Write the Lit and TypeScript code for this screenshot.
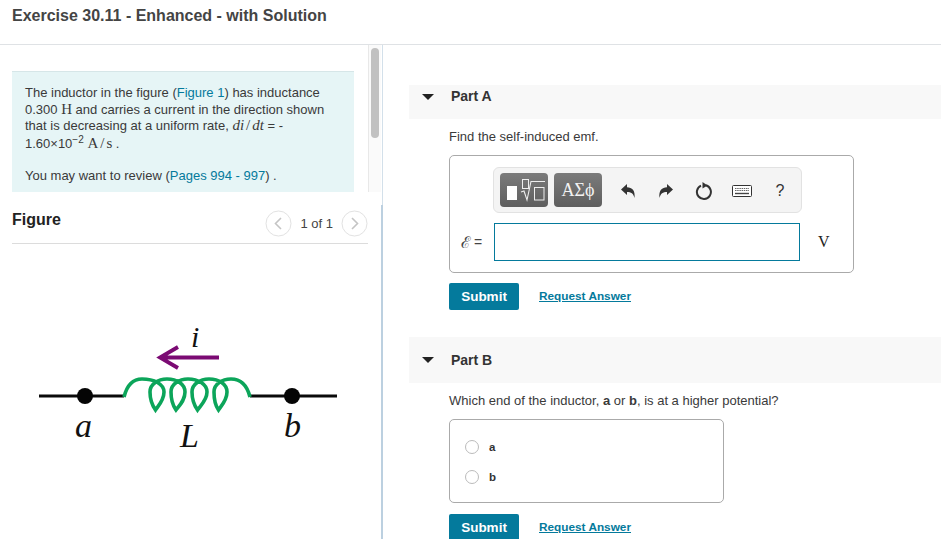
import { LitElement, html, css, svg } from "lit";
import { customElement } from "lit/decorators.js";

const coil = "M124 397C127 385 133 379 142 379C154 379 164 384 164 392C164 400 159 405 155.500 410C152 405 150 400 150 392C150 384 158 379 167 379C177 379 185 384 185 392C185 400 180 405 176 410C172.500 405 171 400 171 392C171 384 179 379 188 379C198 379 207 384 207 392C207 400 201 405 197.500 410C194 405 192 400 192 392C192 384 200 379 209 379C219 379 227 384 227 392C227 400 222 405 218.500 410C215 405 214 400 214 392C214 384 222 379 231 379C240 379 247 385 250 397";

@customElement("app-root")
export class AppRoot extends LitElement {
  static styles = css`
    :host { display: block; font-family: "Liberation Sans", Arial, sans-serif; color: #333; background: #fff; }
    .page { height: 539px; overflow: hidden; display: flex; flex-direction: column; }
    .head { height: 38px; flex: none; border-bottom: 1px solid #dfe2e5; padding: 6px 12px 0; box-sizing: content-box; }
    .head h1 { margin: 0; font-size: 16px; line-height: 19px; font-weight: 700; color: #444; }
    .cols { flex: 1; display: flex; min-height: 0; }
    .left { width: 381px; flex: none; display: flex; flex-direction: column; }
    .top { height: 147px; flex: none; display: flex; }
    .scrollarea { width: 368px; box-sizing: border-box; padding: 26px 14px 0 12px; overflow: hidden; }
    .card { height: 121px; box-sizing: border-box; background: #e6f5f6; border-top: 1px solid #d6e6e8; padding: 13px 13px 0; font-size: 13px; line-height: 16.5px; color: #3a3a3a; }
    .card p { margin: 0 0 16px; }
    .card a, .link { color: #047a9c; text-decoration: none; }
    .m { font-family: "Liberation Serif", serif; font-size: 15px; line-height: 0; }
    .mi { font-family: "Liberation Serif", serif; font-style: italic; font-size: 15px; line-height: 0; }
    .sl { margin: 0 2px; }
    sup { font-size: 10px; line-height: 0; }
    .l4 { display: inline-block; margin-top: 1px; }
    .track { width: 13px; box-sizing: border-box; background: #fafafa; border-left: 1px solid #e8e8e8; padding: 3px 2px 0 2px; }
    .thumb { height: 90px; background: #c1c1c1; border-radius: 4px; }
    .figure { flex: 1; padding: 0 13px 0 12px; }
    .figbar { height: 52px; box-sizing: border-box; border-bottom: 1px solid #dcdcdc; display: flex; align-items: flex-start; padding-top: 19px; }
    .figbar h2 { margin: -1px 0 0; font-size: 16px; line-height: 19px; font-weight: 700; color: #222; flex: 1; }
    .pager { display: flex; align-items: center; gap: 8px; font-size: 13px; color: #444; margin-top: -1px; }
    .pager svg { display: block; }
    .fig { display: block; margin: 0 0 0 -12px; }
    .fig text { font-family: "Liberation Serif", serif; font-style: italic; fill: #111; }
    .divider { width: 2px; flex: none; display: flex; flex-direction: column; }
    .thin { height: 160px; margin-left: 1px; background: #d3e0ea; }
    .thick { flex: 1; background: #bcd0e0; }
    .right { flex: 1; padding: 40px 0 0 26px; min-width: 0; }
    .band { background: #f8f8f8; display: flex; align-items: center; gap: 17px; padding-left: 13px; font-weight: 700; font-size: 14px; color: #333; }
    .a { height: 34px; align-items: flex-start; padding-top: 3px; box-sizing: border-box; }
    .a span { line-height: 17px; }
    .b { height: 46px; margin-top: 27px; }
    .tri { width: 12px; height: 6px; flex: none; display: block; }
    .a .tri { margin-top: 6px; }
    .body { margin-left: 40px; }
    .q { font-size: 13px; line-height: 16px; color: #3a3a3a; margin: 10px 0 10px; }
    .box { border: 1px solid #aaa; border-radius: 5px; box-sizing: border-box; background: #fff; }
    .box.ans { width: 405px; height: 118px; padding: 11px 0 0 43px; }
    .tools { width: 309px; height: 46px; box-sizing: border-box; background: #f4f4f4; border: 1px solid #e2e2e2; border-radius: 6px; display: flex; align-items: center; padding-left: 6px; }
    .btn { flex: none; width: 48px; height: 34px; border-radius: 4px; background: linear-gradient(#7b7b7b, #5e5e5e); display: flex; align-items: center; justify-content: center; color: #f2f2f2; font-family: "Liberation Serif", serif; font-size: 18px; margin-right: 6px; }
    .btn svg { display: block; }
    .icons { display: flex; align-items: center; margin: 1px 0 0 1px; }
    .ic { width: 38px; display: flex; justify-content: center; align-items: center; height: 20px; color: #333; font-size: 16px; }
    .inrow { display: flex; align-items: center; margin: 10px 0 0 -32px; }
    .eq { width: 33px; font-size: 14px; color: #444; white-space: nowrap; display: flex; align-items: center; gap: 3px; }
    .eq i { font-family: "DejaVu Serif", serif; font-size: 16px; font-style: normal; }
    .input { width: 306px; height: 38px; box-sizing: border-box; border: 1px solid #047a9c; background: #fff; }
    .unit { margin-left: 18px; font-family: "Liberation Serif", serif; font-size: 16px; color: #222; }
    .act { display: flex; align-items: center; gap: 20px; margin-top: 10px; }
    .act2 { margin-top: 11px; }
    .sub { width: 70px; height: 27px; box-sizing: border-box; background: #047a9c; color: #fff; font-weight: 700; font-size: 13.5px; border-radius: 2px; display: flex; align-items: center; justify-content: center; }
    .link { font-size: 11.8px; font-weight: 700; text-decoration: underline; margin-top: -2px; }
    .box.mc { width: 275px; height: 84px; padding: 19px 0 0 15px; }
    .opt { display: flex; align-items: center; height: 16px; margin-bottom: 14px; font-size: 11.5px; font-weight: 700; color: #333; }
    .radio { width: 14px; height: 14px; border: 1.5px solid #bbb; border-radius: 50%; box-sizing: border-box; margin-right: 10px; }
    b { font-weight: 700; }
  `;

  private tri() {
    return html`<svg class="tri" viewBox="0 0 12 6"><path d="M0 0H12L6 6Z" fill="#222"/></svg>`;
  }

  private chev(left: boolean) {
    return html`<svg width="27" height="27" viewBox="0 0 27 27">
      <circle cx="13.5" cy="13.5" r="12.5" fill="#fff" stroke="#e2e2e2"/>
      <path d="${left ? "M16 8L10.5 13.5L16 19" : "M11 8L16.5 13.5L11 19"}" fill="none" stroke="#c4c4c4" stroke-width="1.6"/>
    </svg>`;
  }

  private figure() {
    return svg`
      <g transform="translate(0,-244)">
        <path d="M39 396H124M250 396H337" stroke="#0a0a0a" stroke-width="3.2"/>
        <circle cx="85" cy="396" r="8" fill="#050505"/>
        <circle cx="292" cy="396" r="8" fill="#050505"/>
        <path d="${coil}" fill="none" stroke="#0ca55a" stroke-width="3.6"/>
        <path d="M219 357.500H161M178 347L160 357.500L178 368" fill="none" stroke="#7b0a73" stroke-width="3.8"/>
        <text x="191" y="347" font-size="30">i</text>
        <text x="75" y="437" font-size="34">a</text>
        <text x="180" y="447" font-size="34">L</text>
        <text x="284" y="437" font-size="34">b</text>
      </g>`;
  }

  render() {
    return html`
      <div class="page">
        <div class="head"><h1>Exercise 30.11 - Enhanced - with Solution</h1></div>
        <div class="cols">
          <div class="left">
            <div class="top">
              <div class="scrollarea">
                <div class="card">
                  <p>The inductor in the figure (<a>Figure 1</a>) has inductance<br>
                  0.300 <span class="m">H</span> and carries a current in the direction shown<br>
                  that is decreasing at a uniform rate, <span class="mi">di</span><span class="m sl">/</span><span class="mi">dt</span> = -<br>
                  <span class="l4">1.60×10<sup>−2</sup> <span class="m">A<span class="sl">/</span>s</span> .</span></p>
                  <p>You may want to review (<a>Pages 994 - 997</a>) .</p>
                </div>
              </div>
              <div class="track"><div class="thumb"></div></div>
            </div>
            <div class="figure">
              <div class="figbar">
                <h2>Figure</h2>
                <div class="pager">${this.chev(true)}<span>1 of 1</span>${this.chev(false)}</div>
              </div>
              <svg class="fig" width="369" height="295" viewBox="0 0 369 295">${this.figure()}</svg>
            </div>
          </div>
          <div class="divider"><div class="thin"></div><div class="thick"></div></div>
          <div class="right">
            <div class="band a">${this.tri()}<span>Part A</span></div>
            <div class="body">
              <div class="q">Find the self-induced emf.</div>
              <div class="box ans">
                <div class="tools">
                  <div class="btn">
                    <svg width="48" height="34" viewBox="0 0 48 34">
                      <rect x="7" y="13" width="10" height="14" fill="#fff"/>
                      <rect x="22.500" y="6.500" width="6" height="9" fill="none" stroke="#eee"/>
                      <path d="M21 19L24 18L27 27L31 8.500H45" fill="none" stroke="#eee" stroke-width="1.1"/>
                      <rect x="34.500" y="14.500" width="9.500" height="12.500" fill="none" stroke="#eee"/>
                    </svg>
                  </div>
                  <div class="btn">ΑΣϕ</div>
                  <div class="icons">
                    <div class="ic"><svg width="16" height="16" viewBox="0 0 16 16"><path d="M1 6.500L7 1V4.200C12 4.200 15.500 7.500 14.500 15C13.500 10.500 11 9 7 9V12Z" fill="#333"/></svg></div>
                    <div class="ic"><svg width="16" height="16" viewBox="0 0 16 16"><path d="M15 6.500L9 1V4.200C4 4.200 .5 7.500 1.500 15C2.500 10.500 5 9 9 9V12Z" fill="#333"/></svg></div>
                    <div class="ic"><svg width="18" height="18" viewBox="0 0 18 18"><path d="M6 3.600A7 7 0 1 0 11 3.300" fill="none" stroke="#333" stroke-width="2"/><path d="M7.500 0L12.500 3.400L7.500 6.500Z" fill="#333"/></svg></div>
                    <div class="ic"><svg width="20" height="12" viewBox="0 0 20 12"><rect x=".5" y=".5" width="19" height="11" rx="1" fill="#fff" stroke="#333"/><path d="M3 3.500H17M3 5.500H17" stroke="#666" stroke-width="1" stroke-dasharray="1.5 .7"/><path d="M3 8.500H17" stroke="#444" stroke-width="1.4"/></svg></div>
                    <div class="ic">?</div>
                  </div>
                </div>
                <div class="inrow">
                  <div class="eq"><i>ℰ</i><span>=</span></div>
                  <div class="input"></div>
                  <div class="unit">V</div>
                </div>
              </div>
              <div class="act"><div class="sub">Submit</div><a class="link">Request Answer</a></div>
            </div>
            <div class="band b">${this.tri()}<span>Part B</span></div>
            <div class="body">
              <div class="q">Which end of the inductor, <b>a</b> or <b>b</b>, is at a higher potential?</div>
              <div class="box mc">
                <div class="opt"><span class="radio"></span>a</div>
                <div class="opt"><span class="radio"></span>b</div>
              </div>
              <div class="act act2"><div class="sub">Submit</div><a class="link">Request Answer</a></div>
            </div>
          </div>
        </div>
      </div>
    `;
  }
}
